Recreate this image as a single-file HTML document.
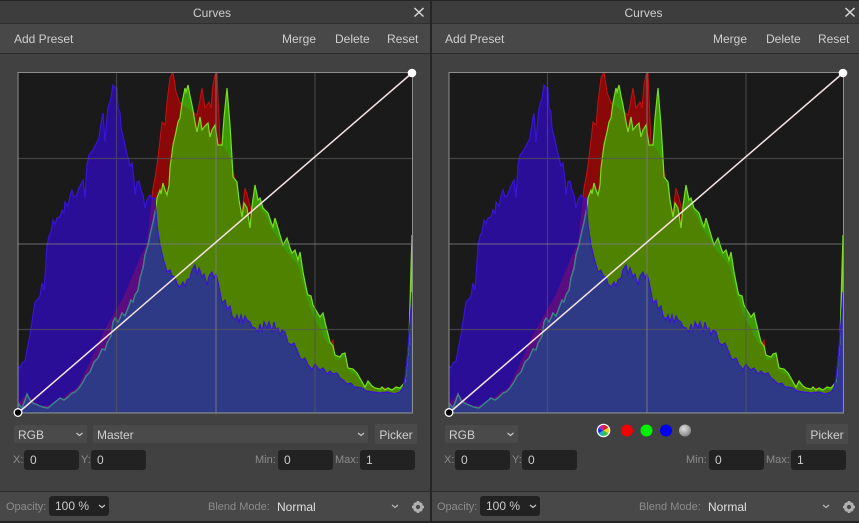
<!DOCTYPE html>
<html><head><meta charset="utf-8"><title>Curves</title>
<style>
html,body{margin:0;padding:0;background:#252525}
body{width:859px;height:523px;overflow:hidden;position:relative;font-family:"Liberation Sans",sans-serif;font-size:12px;color:#cfcfcf}
.p{position:absolute;top:1px;height:520px;background:#414141;overflow:hidden}
.p div{position:absolute;white-space:nowrap}
.t{height:22px;left:0;right:0;top:0;background:#3d3d3d;border-bottom:1px solid #2f2f2f}
.b{height:29px;left:0;right:0;top:23px;background:#484848;border-bottom:1px solid #2b2b2b}
.f{height:30px;left:0;right:0;top:490px;background:#484848;border-top:1px solid #2b2b2b}
.l{line-height:16px;height:16px}
.d{color:#8c8c8c;font-size:11px}
.s{background:#4a4a4a;height:18px;line-height:20px;border-radius:2px;top:424px}
.i{background:#222;height:20px;line-height:20px;top:449px;width:55px;border-radius:3px;color:#ccc;text-indent:6px}
svg{position:absolute;left:0;top:0}
</style></head><body>

<div class="p" style="left:0;width:430px">
<div class="t"></div><div class="b"></div><div class="f"></div>
<div class="l" style="left:0;width:424px;text-align:center;top:4px">Curves</div>
<div class="l" style="left:14px;top:30px">Add Preset</div>
<div class="l" style="left:282px;top:30px">Merge</div>
<div class="l" style="left:335px;top:30px">Delete</div>
<div class="l" style="left:387px;top:30px">Reset</div>
<div class="s" style="left:14px;width:73px;text-indent:4px">RGB</div>
<div class="s" style="left:93px;width:275px;text-indent:4px">Master</div>
<div class="s" style="left:375px;width:42px;height:20px;top:423px;line-height:22px;text-align:center">Picker</div>
<div class="l d" style="left:13px;top:451px">X:</div><div class="i" style="left:24px">0</div>
<div class="l d" style="left:81px;top:451px">Y:</div><div class="i" style="left:91px">0</div>
<div class="l d" style="left:255px;top:451px">Min:</div><div class="i" style="left:278px">0</div>
<div class="l d" style="left:335px;top:451px">Max:</div><div class="i" style="left:360px">1</div>
<div class="l d" style="left:6px;top:498px">Opacity:</div>
<div class="i" style="left:49px;top:495px;width:60px;text-indent:6px">100 %</div>
<div class="l d" style="left:208px;top:498px">Blend Mode:</div>
<div class="l" style="left:277px;top:498px;color:#e0e0e0">Normal</div>
</div>

<div class="p" style="left:432px;width:427px">
<div class="t"></div><div class="b"></div><div class="f"></div>
<div class="l" style="left:0;width:423px;text-align:center;top:4px">Curves</div>
<div class="l" style="left:13px;top:30px">Add Preset</div>
<div class="l" style="left:281px;top:30px">Merge</div>
<div class="l" style="left:334px;top:30px">Delete</div>
<div class="l" style="left:386px;top:30px">Reset</div>
<div class="s" style="left:13px;width:73px;text-indent:4px">RGB</div>
<div class="s" style="left:374px;width:42px;height:20px;top:423px;line-height:22px;text-align:center">Picker</div>
<div class="l d" style="left:12px;top:451px">X:</div><div class="i" style="left:23px">0</div>
<div class="l d" style="left:80px;top:451px">Y:</div><div class="i" style="left:90px">0</div>
<div class="l d" style="left:254px;top:451px">Min:</div><div class="i" style="left:277px">0</div>
<div class="l d" style="left:334px;top:451px">Max:</div><div class="i" style="left:359px">1</div>
<div class="l d" style="left:5px;top:498px">Opacity:</div>
<div class="i" style="left:48px;top:495px;width:60px;text-indent:6px">100 %</div>
<div class="l d" style="left:207px;top:498px">Blend Mode:</div>
<div class="l" style="left:276px;top:498px;color:#e0e0e0">Normal</div>
</div>

<svg width="859" height="523" viewBox="0 0 859 523">
<defs>
<polygon id="bl" points="18,413 18,366 20,368 22,363 25,361 27,350 30,335 33,315 35,302 38,299 40,296 42,283 44,290 46,262 47,245 49,236 51,232 53,220 55,224 57,218 60,217 62,210 64,213 65,202 68,206 70,196 72,190 74,197 76,196 79,188 83,180 85,198 87,165 89,155 93,150 97,142 99,138 100,130 102,118 103,113 105,142 107,118 108,108 111,98 113,85 115,88 117,88 118,108 120,112 121,128 124,140 126,150 128,158 130,166 132,163 134,180 135,195 137,182 139,181 141,190 143,195 145,208 147,200 150,195 153,199 155,198 157,225 160,245 163,258 167,272 170,270 172,276 175,277 177,284 180,287 183,282 185,286 187,280 190,278 192,270 195,265 197,274 199,268 202,277 204,274 207,285 209,276 212,272 214,278 216,274 218,282 220,292 222,303 225,300 227,309 230,306 232,316 235,320 237,315 239,322 241,315 243,323 245,316 247,320 250,322 252,327 255,328 258,332 260,324 262,332 264,322 267,328 269,322 272,332 274,322 276,330 278,328 280,335 282,330 285,332 288,343 291,345 294,343 297,350 300,358 302,360 305,358 308,365 310,367 312,370 315,364 317,367 320,370 323,368 327,374 330,371 333,374 337,373 340,378 343,380 347,384 351,383 354,387 357,387 362,388 366,391 373,392 380,393 388,392 394,394 400,392 403,388 405,378 407,360 409,335 410,322 412,292 412,413"/>
<polygon id="rd" points="18,413 18,403 27,394 33,400 40,406 52,405 60,400 70,392 77,388 85,372 93,355 102,335 113,315 123,298 132,277 140,258 147,243 150,215 153,188 155,178 157,165 160,140 162,122 165,125 167,102 170,78 173,72 175,85 176,92 180,103 190,110 197,115 199,105 202,88 205,108 209,102 211,108 213,85 215,75 217,73 220,143 226,150 230,158 236,185 240,208 242,212 245,188 248,198 251,210 258,205 265,215 272,230 278,238 285,250 292,258 298,265 303,285 309,305 315,320 320,328 325,340 330,345 333,340 335,360 340,360 345,356 349,372 357,376 365,390 368,384 375,388 380,392 385,388 390,392 395,389 400,391 405,385 412,413"/>
<polygon id="gr" points="18,413 18,403 22,408 25,400 27,394 30,400 33,403 38,405 43,407 48,408 54,403 60,398 64,400 68,397 72,393 75,392 79,388 83,382 86,376 90,372 94,362 98,358 102,349 105,350 107,343 111,336 113,322 115,318 118,322 120,318 122,313 125,316 128,308 131,300 133,302 135,295 138,290 140,278 143,268 145,255 148,245 150,235 153,222 156,207 157,198 160,190 161,194 163,183 165,190 167,195 169,185 170,168 173,145 176,132 178,122 180,118 182,103 185,88 186,92 188,85 190,96 192,105 195,122 197,132 200,117 202,130 205,126 208,123 210,137 212,130 215,125 218,145 222,145 224,118 227,88 230,125 232,158 233,177 237,182 239,200 242,217 244,203 247,208 250,228 252,206 255,185 258,200 260,198 263,208 268,213 271,222 273,227 275,218 280,235 283,245 287,238 290,248 292,253 295,250 298,260 300,252 303,272 307,292 308,295 311,296 313,305 317,312 320,317 323,313 325,322 327,330 330,342 333,346 335,355 340,357 342,354 345,353 348,368 353,369 357,373 361,380 365,387 368,381 372,386 375,388 380,389 382,387 385,390 388,388 392,390 396,387 400,388 405,382 409,340 411,268 412,235 412,413"/>
<clipPath id="cb"><use href="#bl"/></clipPath>
<clipPath id="cr"><use href="#rd"/></clipPath>
<clipPath id="cp"><rect x="18" y="73" width="394.500" height="340"/></clipPath>
<g id="plot">
<rect x="18" y="73" width="394" height="340" fill="#1a1a1a"/>
<g clip-path="url(#cp)">
<use href="#rd" fill="#8a0808"/>
<use href="#rd" fill="none" stroke="#c81010" stroke-width="1"/>
<use href="#bl" fill="#2a0e98"/>
<g clip-path="url(#cb)"><use href="#rd" fill="#5a0c80"/></g>
<use href="#gr" fill="#3f9a08"/>
<g clip-path="url(#cr)"><use href="#gr" fill="#4f8200"/></g>
<g clip-path="url(#cb)"><use href="#gr" fill="#2f3a86"/></g>
<use href="#gr" fill="none" stroke="#78e01c" stroke-width="1.200"/>
<g clip-path="url(#cb)"><use href="#gr" fill="none" stroke="#3a7c98" stroke-width="1.200"/></g>
<use href="#bl" fill="none" stroke="#3814d8" stroke-width="1.200"/>
</g>
<g fill="none">
<path d="M116.500 73V413M315 73V413M18 158.500H412M18 329.500H412" stroke="#555" stroke-opacity=".7" stroke-width="1.200"/>
<path d="M216 73V413M18 244H412" stroke="#808080" stroke-opacity=".55" stroke-width="1.600"/>
</g>
<rect x="18" y="72.500" width="394.500" height="340.500" fill="none" stroke="#8e8e8e"/>
<path d="M18 413L412 73" stroke="#f6e4e4" stroke-width="1.500"/>
<circle cx="18" cy="412.500" r="3.800" fill="#000" stroke="#fff" stroke-width="1.300"/>
<circle cx="412" cy="73" r="4.300" fill="#fff"/>
<path d="M414.500 8L423.500 16.500M423.500 8L414.500 16.500" stroke="#d8d8d8" stroke-width="1.500" fill="none"/>
<path d="M76.500 433L79.500 435.500L82.500 433" stroke="#c8c8c8" stroke-width="1.200" fill="none"/>
<path d="M99 505L102 507.500L105 505" stroke="#c8c8c8" stroke-width="1.200" fill="none"/>
<path d="M392 505L395 507.500L398 505" stroke="#b8b8b8" stroke-width="1.200" fill="none"/>
<g fill="#b0b0b0">
<circle cx="418" cy="507" r="3.600" fill="none" stroke="#b0b0b0" stroke-width="3"/>
<path d="M416.700 501h2.600v2.500h-2.600zM416.700 510.500h2.600v2.500h-2.600zM412 505.700h2.500v2.600H412zM421.500 505.700h2.500v2.600h-2.500z"/>
<path d="M413.300 504l1.800-1.800 1.800 1.800-1.800 1.800zM419.100 504l1.800-1.800 1.800 1.800-1.800 1.800zM413.300 510l1.800-1.800 1.800 1.800-1.800 1.800zM419.100 510l1.800-1.800 1.800 1.800-1.800 1.800z"/>
</g>
</g>
<radialGradient id="gy" cx=".4" cy=".35" r=".7"><stop offset="0" stop-color="#e0e0e0"/><stop offset="1" stop-color="#808080"/></radialGradient>
</defs>
<use href="#plot"/>
<path d="M358 433L361 435.500L364 433" stroke="#c8c8c8" stroke-width="1.200" fill="none"/>
<use href="#plot" x="431"/>
<circle cx="603.500" cy="430.500" r="6.800" fill="#fff"/>
<path d="M603.500 430.500V425A5.500 5.500 0 0 1 608.300 427.800Z" fill="#e02020"/>
<path d="M603.500 430.500L608.300 427.800A5.500 5.500 0 0 1 608.300 433.200Z" fill="#e8d020"/>
<path d="M603.500 430.500L608.300 433.200A5.500 5.500 0 0 1 603.500 436Z" fill="#40c040"/>
<path d="M603.500 430.500V436A5.500 5.500 0 0 1 598.700 433.200Z" fill="#20b0c0"/>
<path d="M603.500 430.500L598.700 433.200A5.500 5.500 0 0 1 598.700 427.800Z" fill="#2030d0"/>
<path d="M603.500 430.500L598.700 427.800A5.500 5.500 0 0 1 603.500 425Z" fill="#c020b0"/>
<circle cx="627" cy="430.500" r="6" fill="#f00000"/>
<circle cx="646.500" cy="430.500" r="6" fill="#00f000"/>
<circle cx="666" cy="430.500" r="6" fill="#0000f0"/>
<circle cx="685" cy="430.500" r="6" fill="url(#gy)"/>
</svg>
</body></html>
